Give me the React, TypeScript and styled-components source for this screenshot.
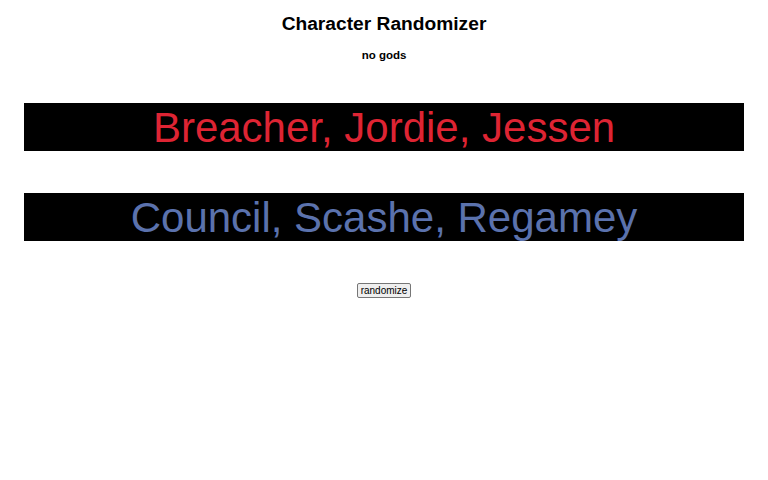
import * as React from 'react';
import styled, { createGlobalStyle } from 'styled-components';

type Team = 'red' | 'blue';

const GlobalStyle = createGlobalStyle`
  html, body {
    margin: 0;
    padding: 0;
    background: #ffffff;
    font-family: "Liberation Sans", Arial, sans-serif;
  }
`;

const Page = styled.div`
  display: flex;
  flex-direction: column;
  align-items: center;
  padding: 13px 24px 0;
`;

const Title = styled.h2`
  margin: 0;
  font-size: 19.2px;
  line-height: 22px;
  font-weight: bold;
  color: #000;
`;

const Subtitle = styled.h5`
  margin: 13px 0 0;
  font-size: 11.5px;
  line-height: 14px;
  font-weight: bold;
  color: #000;
`;

const teamColors: Record<Team, string> = {
  red: '#de2433',
  blue: '#5b72ad',
};

const Lineup = styled.div<{ $team: Team }>`
  align-self: stretch;
  height: 48px;
  margin-top: ${(p) => (p.$team === 'red' ? '41px' : '42px')};
  background: #000;
  color: ${(p) => teamColors[p.$team]};
  font-size: 42px;
  line-height: 50px;
  text-align: center;
  white-space: nowrap;
  overflow: hidden;
`;

const RandomizeButton = styled.button`
  margin-top: 42px;
  font-family: "Liberation Sans", Arial, sans-serif;
  font-size: 10px;
  line-height: 13px;
  padding: 0 3px;
  background: #efefef;
  color: #000;
  border: 1px solid #767676;
  border-radius: 2px;
  cursor: pointer;
`;

const pool = [
  'Breacher', 'Jordie', 'Jessen', 'Council', 'Scashe', 'Regamey',
  'Kaze', 'Ryuji', 'Pyrox', 'Smith', 'Sparrow', 'Raffl',
];

const App: React.FC = () => {
  const [red, setRed] = React.useState(['Breacher', 'Jordie', 'Jessen']);
  const [blue, setBlue] = React.useState(['Council', 'Scashe', 'Regamey']);

  const handleRandomize = React.useCallback(() => {
    const shuffled = [...pool].sort(() => Math.random() - 0.5);
    setRed(shuffled.slice(0, 3));
    setBlue(shuffled.slice(3, 6));
  }, []);

  return (
    <>
      <GlobalStyle />
      <Page>
        <Title>Character Randomizer</Title>
        <Subtitle>no gods</Subtitle>
        <Lineup $team="red">{red.join(', ')}</Lineup>
        <Lineup $team="blue">{blue.join(', ')}</Lineup>
        <RandomizeButton onClick={handleRandomize}>randomize</RandomizeButton>
      </Page>
    </>
  );
};

export default App;
